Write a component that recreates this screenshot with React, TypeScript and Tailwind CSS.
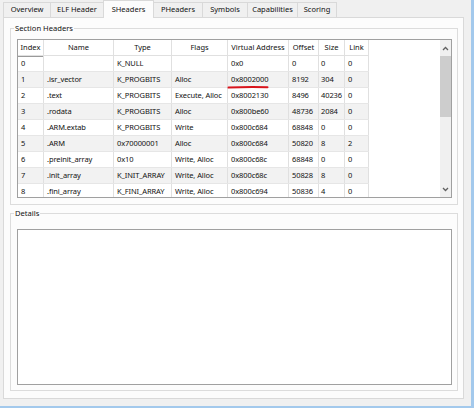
import React from "react";

const tabs = [
  { label: "Overview", w: "w-[48px]" },
  { label: "ELF Header", w: "w-[54px]" },
  { label: "SHeaders", w: "w-[51px]", active: true },
  { label: "PHeaders", w: "w-[50px]" },
  { label: "Symbols", w: "w-[46px]" },
  { label: "Capabilities", w: "w-[51px]" },
  { label: "Scoring", w: "w-[40px]" },
];

const cols = [
  { label: "Index", w: "w-[26px]", pad: "pl-[3px]" },
  { label: "Name", w: "w-[70px]", pad: "pl-[3px]" },
  { label: "Type", w: "w-[58px]", pad: "pl-[3px]" },
  { label: "Flags", w: "w-[56px]", pad: "pl-[3px]" },
  { label: "Virtual Address", w: "w-[61px]", pad: "pl-[3px]" },
  { label: "Offset", w: "w-[30px]", pad: "pl-[3px]" },
  { label: "Size", w: "w-[26px]", pad: "pl-[2px]" },
  { label: "Link", w: "w-[24px]", pad: "pl-[3px]" },
];

const rows = [
  ["0", "", "K_NULL", "", "0x0", "0", "0", "0"],
  ["1", ".isr_vector", "K_PROGBITS", "Alloc", "0x8002000", "8192", "304", "0"],
  ["2", ".text", "K_PROGBITS", "Execute, Alloc", "0x8002130", "8496", "40236", "0"],
  ["3", ".rodata", "K_PROGBITS", "Alloc", "0x800be60", "48736", "2084", "0"],
  ["4", ".ARM.extab", "K_PROGBITS", "Write", "0x800c684", "68848", "0", "0"],
  ["5", ".ARM", "0x70000001", "Alloc", "0x800c684", "50820", "8", "2"],
  ["6", ".preinit_array", "0x10", "Write, Alloc", "0x800c68c", "68848", "0", "0"],
  ["7", ".init_array", "K_INIT_ARRAY", "Write, Alloc", "0x800c68c", "50828", "8", "0"],
  ["8", ".fini_array", "K_FINI_ARRAY", "Write, Alloc", "0x800c694", "50836", "4", "0"],
];

function Chevron({ up }: { up?: boolean }) {
  return (
    <svg width="7" height="5" viewBox="0 0 7 5">
      <polyline
        points={up ? "1,4 3.5,1.5 6,4" : "1,1 3.5,3.5 6,1"}
        fill="none"
        stroke="#606060"
        strokeWidth="1.3"
      />
    </svg>
  );
}

export default function App() {
  return (
    <div
      className="w-[474px] h-[408px] bg-[#f0f0f0] flex overflow-hidden text-[#111111]"
      style={{ fontFamily: '"Noto Sans", "Open Sans", sans-serif' }}
    >
      <div className="w-[471px] flex flex-col">
        <div className="h-[406px] pl-[3px] flex flex-col">
          {/* Tabs */}
          <div className="h-[17px] flex items-end">
            {tabs.map((t, i) => (
              <div
                key={t.label}
                className={
                  (t.active
                    ? "h-[18px] -mb-px relative z-10 bg-[#fcfcfc] "
                    : "h-[15px] bg-[#f0f0f0] ") +
                  (i > 0 ? "-ml-px " : "") +
                  t.w +
                  " border border-b-0 border-[#d9d9d9] flex items-center justify-center text-[7.5px] leading-none whitespace-nowrap"
                }
              >
                {t.label}
              </div>
            ))}
          </div>
          {/* Pane */}
          <div className="w-[461px] h-[382px] border border-[#d9d9d9] bg-[#fcfcfc] pl-[6px] pt-[10px] flex flex-col">
            {/* Section Headers group */}
            <div className="relative w-[448px] h-[177px] border border-[#dcdcdc] pl-[6px] pt-[10px]">
              <div className="absolute left-[3px] top-[-7px] px-[1px] bg-[#fcfcfc] text-[7.6px] leading-[12px]">
                Section Headers
              </div>
              <div className="relative w-[435px] h-[159px] border border-[#a0a0a0] bg-white flex justify-between overflow-hidden">
                <div className="flex flex-col w-[351px]">
                  <div className="flex h-[16px] border-b border-[#e0e0e0] shrink-0">
                    {cols.map((c) => (
                      <div
                        key={c.label}
                        className={
                          c.w +
                          " border-r border-[#e0e0e0] flex items-center justify-center text-[7.5px] whitespace-nowrap overflow-hidden"
                        }
                      >
                        {c.label}
                      </div>
                    ))}
                  </div>
                  {rows.map((r, ri) => (
                    <div
                      key={ri}
                      className={
                        "flex h-[16px] shrink-0 border-b border-[#e6e6e6] " +
                        (ri % 2 === 1 ? "bg-[#f2f2f2]" : "bg-white")
                      }
                    >
                      {r.map((v, ci) => (
                        <div
                          key={ci}
                          className={
                            cols[ci].w +
                            " " +
                            cols[ci].pad +
                            " relative border-r border-[#e0e0e0] flex items-center text-[7.5px] tracking-[-0.1px] whitespace-nowrap overflow-hidden"
                          }
                        >
                          {ri === 0 && ci === 0 && (
                            <div className="absolute -left-px top-0 -right-px -bottom-px border border-[#9a9a9a] bg-white" />
                          )}
                          <span className="relative">{v}</span>
                        </div>
                      ))}
                    </div>
                  ))}
                </div>
                {/* Scrollbar */}
                <div className="w-[11px] h-full bg-[#f0f0f0] flex flex-col">
                  <div className="h-[16px] flex items-center justify-center">
                    <Chevron up />
                  </div>
                  <div className="h-[61px] bg-[#cdcdcd]" />
                  <div className="flex-1" />
                  <div className="h-[16px] flex items-center justify-center">
                    <Chevron />
                  </div>
                </div>
                {/* red underline annotation */}
                <svg
                  className="absolute left-[209px] top-[45px]"
                  width="42"
                  height="5"
                  viewBox="0 0 42 5"
                >
                  <path
                    d="M1.5 2.6 Q20 1.6 40.5 2.2"
                    fill="none"
                    stroke="#d8141c"
                    strokeWidth="2"
                    strokeLinecap="round"
                  />
                </svg>
              </div>
            </div>
            {/* Details group */}
            <div className="relative mt-[8px] w-[448px] h-[178px] border border-[#dcdcdc] pl-[6px] pt-[15px]">
              <div className="absolute left-[3px] top-[-7px] px-[1px] bg-[#fcfcfc] text-[7.6px] leading-[12px]">
                Details
              </div>
              <div className="w-[435px] h-[156px] border border-[#a0a0a0] bg-white" />
            </div>
          </div>
        </div>
        <div className="h-[2px] bg-[#a3c9ec]" />
      </div>
      <div className="w-[3px] h-full bg-[#a3c9ec]" />
    </div>
  );
}
